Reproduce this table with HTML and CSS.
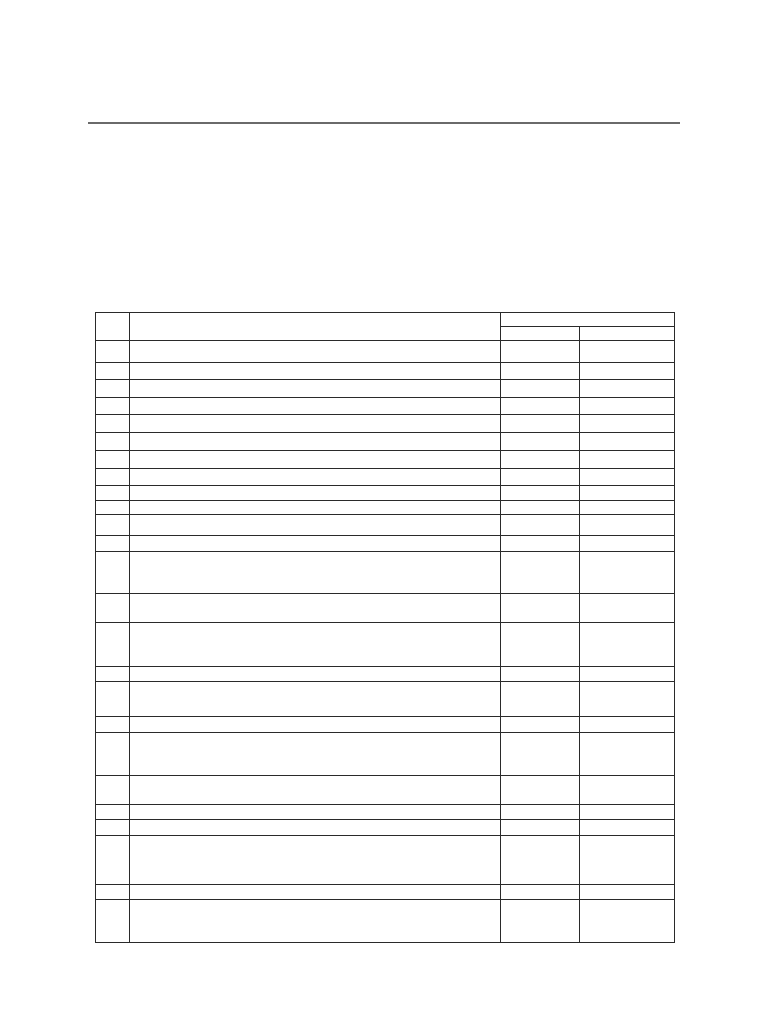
FILE: index.html
```html
<!DOCTYPE html>
<html>
<head>
<meta charset="utf-8">
<link rel="stylesheet" href="styles.css">
</head>
<body>
<div class="page">
  <div class="rule"></div>
  <table class="grid">
    <colgroup>
      <col class="c1"><col class="c2"><col class="c3"><col class="c4">
    </colgroup>
    <tr class="h14"><td rowspan="2"></td><td rowspan="2"></td><td colspan="2"></td></tr>
    <tr class="h14"><td></td><td></td></tr>
    <tr class="h22"><td></td><td></td><td></td><td></td></tr>
    <tr class="h17"><td></td><td></td><td></td><td></td></tr>
    <tr class="h18"><td></td><td></td><td></td><td></td></tr>
    <tr class="h17"><td></td><td></td><td></td><td></td></tr>
    <tr class="h18"><td></td><td></td><td></td><td></td></tr>
    <tr class="h18"><td></td><td></td><td></td><td></td></tr>
    <tr class="h18"><td></td><td></td><td></td><td></td></tr>
    <tr class="h17"><td></td><td></td><td></td><td></td></tr>
    <tr class="h15"><td></td><td></td><td></td><td></td></tr>
    <tr class="h14"><td></td><td></td><td></td><td></td></tr>
    <tr class="h21"><td></td><td></td><td></td><td></td></tr>
    <tr class="h16"><td></td><td></td><td></td><td></td></tr>
    <tr class="h42"><td></td><td></td><td></td><td></td></tr>
    <tr class="h29"><td></td><td></td><td></td><td></td></tr>
    <tr class="h44"><td></td><td></td><td></td><td></td></tr>
    <tr class="h15"><td></td><td></td><td></td><td></td></tr>
    <tr class="h35"><td></td><td></td><td></td><td></td></tr>
    <tr class="h16"><td></td><td></td><td></td><td></td></tr>
    <tr class="h43"><td></td><td></td><td></td><td></td></tr>
    <tr class="h29"><td></td><td></td><td></td><td></td></tr>
    <tr class="h15"><td></td><td></td><td></td><td></td></tr>
    <tr class="h16"><td></td><td></td><td></td><td></td></tr>
    <tr class="h49"><td></td><td></td><td></td><td></td></tr>
    <tr class="h15"><td></td><td></td><td></td><td></td></tr>
    <tr class="h43"><td></td><td></td><td></td><td></td></tr>
  </table>
</div>
</body>
</html>
```
FILE: styles.css
```css
html, body {
  margin: 0;
  padding: 0;
  background: #ffffff;
  font-family: "Liberation Serif", serif;
}
.page {
  padding-top: 122px;
  width: 768px;
  height: 1024px;
  box-sizing: border-box;
}
.rule {
  margin-left: 88px;
  width: 592px;
  height: 2px;
  background: #6a6a6a;
}
.grid {
  margin-top: 188px;
  margin-left: 95px;
  border-collapse: collapse;
  table-layout: fixed;
  width: 580px;
  border: 1px solid #555;
}
.grid td {
  border: 1px solid #2a2a2a;
  padding: 0;
}
.c1 { width: 34px; }
.c2 { width: 371px; }
.c3 { width: 79px; }
.c4 { width: 95px; }
.h14 { height: 14px; }
.h15 { height: 15px; }
.h16 { height: 16px; }
.h17 { height: 17px; }
.h18 { height: 18px; }
.h21 { height: 21px; }
.h22 { height: 22px; }
.h29 { height: 29px; }
.h35 { height: 35px; }
.h42 { height: 42px; }
.h43 { height: 43px; }
.h44 { height: 44px; }
.h49 { height: 49px; }
```
